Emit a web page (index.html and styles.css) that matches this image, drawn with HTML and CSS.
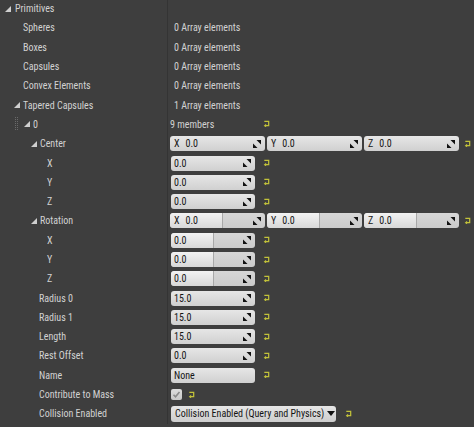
FILE: index.html
```html
<!DOCTYPE html>
<html>
<head>
<meta charset="utf-8">
<link rel="stylesheet" href="styles.css">
</head>
<body>
<div class="panel">
  <div class="row"><div class="name i6"><span class="tri"><svg viewBox="0 0 6 6"><polygon points="6,0 6,6 0,6"/></svg></span>Primitives</div><div class="val noline"></div></div>
  <div class="row"><div class="name i23">Spheres</div><div class="val"><span class="txt t4">0 Array elements</span></div></div>
  <div class="row"><div class="name i23">Boxes</div><div class="val"><span class="txt t4">0 Array elements</span></div></div>
  <div class="row"><div class="name i23">Capsules</div><div class="val"><span class="txt t4">0 Array elements</span></div></div>
  <div class="row"><div class="name i23">Convex Elements</div><div class="val"><span class="txt t4">0 Array elements</span></div></div>
  <div class="row"><div class="name i14"><span class="tri"><svg viewBox="0 0 6 6"><polygon points="6,0 6,6 0,6"/></svg></span>Tapered Capsules</div><div class="val"><span class="txt t4">1 Array elements</span></div></div>
  <div class="row"><div class="name i14"><span class="grip"><svg viewBox="0 0 4 14"><g fill="#6a6a6a"><rect x="0" y="0" width="1" height="1"/><rect x="2" y="0" width="1" height="1"/><rect x="0" y="2" width="1" height="1"/><rect x="2" y="2" width="1" height="1"/><rect x="0" y="4" width="1" height="1"/><rect x="2" y="4" width="1" height="1"/><rect x="0" y="6" width="1" height="1"/><rect x="2" y="6" width="1" height="1"/><rect x="0" y="8" width="1" height="1"/><rect x="2" y="8" width="1" height="1"/><rect x="0" y="10" width="1" height="1"/><rect x="2" y="10" width="1" height="1"/><rect x="0" y="12" width="1" height="1"/><rect x="2" y="12" width="1" height="1"/></g></svg></span><span class="tri"><svg viewBox="0 0 6 6"><polygon points="6,0 6,6 0,6"/></svg></span>0</div><div class="val"><span class="txt members">9 members</span><span class="reset"><svg viewBox="0 0 8 8"><path d="M1.5 1.5H6.5V6.5H3.2" fill="none" stroke="#c2c23a" stroke-width="1.4"/><polygon points="0.8,6.5 3.6,4.4 3.6,8.6" fill="#c2c23a"/></svg></span></div></div>

  <div class="row"><div class="name i30"><span class="tri"><svg viewBox="0 0 6 6"><polygon points="6,0 6,6 0,6"/></svg></span>Center</div>
    <div class="val vec">
      <div class="field wide"><span class="ax">X</span><span class="num">0.0</span><span class="spin"><svg viewBox="0 0 8 8"><polygon points="3.5,0 8,0 8,4.5"/><polygon points="0,3.5 0,8 4.5,8"/></svg></span></div>
      <div class="field wide"><span class="ax">Y</span><span class="num">0.0</span><span class="spin"><svg viewBox="0 0 8 8"><polygon points="3.5,0 8,0 8,4.5"/><polygon points="0,3.5 0,8 4.5,8"/></svg></span></div>
      <div class="field wide"><span class="ax">Z</span><span class="num">0.0</span><span class="spin"><svg viewBox="0 0 8 8"><polygon points="3.5,0 8,0 8,4.5"/><polygon points="0,3.5 0,8 4.5,8"/></svg></span></div>
      <span class="reset rv"><svg viewBox="0 0 8 8"><path d="M1.5 1.5H6.5V6.5H3.2" fill="none" stroke="#c2c23a" stroke-width="1.4"/><polygon points="0.8,6.5 3.6,4.4 3.6,8.6" fill="#c2c23a"/></svg></span>
    </div></div>
  <div class="row"><div class="name i47">X</div><div class="val"><div class="field"><span class="num">0.0</span><span class="spin"><svg viewBox="0 0 8 8"><polygon points="3.5,0 8,0 8,4.5"/><polygon points="0,3.5 0,8 4.5,8"/></svg></span></div><span class="reset"><svg viewBox="0 0 8 8"><path d="M1.5 1.5H6.5V6.5H3.2" fill="none" stroke="#c2c23a" stroke-width="1.4"/><polygon points="0.8,6.5 3.6,4.4 3.6,8.6" fill="#c2c23a"/></svg></span></div></div>
  <div class="row"><div class="name i47">Y</div><div class="val"><div class="field"><span class="num">0.0</span><span class="spin"><svg viewBox="0 0 8 8"><polygon points="3.5,0 8,0 8,4.5"/><polygon points="0,3.5 0,8 4.5,8"/></svg></span></div><span class="reset"><svg viewBox="0 0 8 8"><path d="M1.5 1.5H6.5V6.5H3.2" fill="none" stroke="#c2c23a" stroke-width="1.4"/><polygon points="0.8,6.5 3.6,4.4 3.6,8.6" fill="#c2c23a"/></svg></span></div></div>
  <div class="row"><div class="name i47">Z</div><div class="val"><div class="field"><span class="num">0.0</span><span class="spin"><svg viewBox="0 0 8 8"><polygon points="3.5,0 8,0 8,4.5"/><polygon points="0,3.5 0,8 4.5,8"/></svg></span></div><span class="reset"><svg viewBox="0 0 8 8"><path d="M1.5 1.5H6.5V6.5H3.2" fill="none" stroke="#c2c23a" stroke-width="1.4"/><polygon points="0.8,6.5 3.6,4.4 3.6,8.6" fill="#c2c23a"/></svg></span></div></div>

  <div class="row"><div class="name i30"><span class="tri"><svg viewBox="0 0 6 6"><polygon points="6,0 6,6 0,6"/></svg></span>Rotation</div>
    <div class="val vec">
      <div class="field wide slider"><span class="fill"></span><span class="ax">X</span><span class="num">0.0</span><span class="spin"><svg viewBox="0 0 8 8"><polygon points="3.5,0 8,0 8,4.5"/><polygon points="0,3.5 0,8 4.5,8"/></svg></span></div>
      <div class="field wide slider"><span class="fill"></span><span class="ax">Y</span><span class="num">0.0</span><span class="spin"><svg viewBox="0 0 8 8"><polygon points="3.5,0 8,0 8,4.5"/><polygon points="0,3.5 0,8 4.5,8"/></svg></span></div>
      <div class="field wide slider"><span class="fill"></span><span class="ax">Z</span><span class="num">0.0</span><span class="spin"><svg viewBox="0 0 8 8"><polygon points="3.5,0 8,0 8,4.5"/><polygon points="0,3.5 0,8 4.5,8"/></svg></span></div>
      <span class="reset rv"><svg viewBox="0 0 8 8"><path d="M1.5 1.5H6.5V6.5H3.2" fill="none" stroke="#c2c23a" stroke-width="1.4"/><polygon points="0.8,6.5 3.6,4.4 3.6,8.6" fill="#c2c23a"/></svg></span>
    </div></div>
  <div class="row"><div class="name i47">X</div><div class="val"><div class="field slider"><span class="fill"></span><span class="num">0.0</span><span class="spin"><svg viewBox="0 0 8 8"><polygon points="3.5,0 8,0 8,4.5"/><polygon points="0,3.5 0,8 4.5,8"/></svg></span></div><span class="reset"><svg viewBox="0 0 8 8"><path d="M1.5 1.5H6.5V6.5H3.2" fill="none" stroke="#c2c23a" stroke-width="1.4"/><polygon points="0.8,6.5 3.6,4.4 3.6,8.6" fill="#c2c23a"/></svg></span></div></div>
  <div class="row"><div class="name i47">Y</div><div class="val"><div class="field slider"><span class="fill"></span><span class="num">0.0</span><span class="spin"><svg viewBox="0 0 8 8"><polygon points="3.5,0 8,0 8,4.5"/><polygon points="0,3.5 0,8 4.5,8"/></svg></span></div><span class="reset"><svg viewBox="0 0 8 8"><path d="M1.5 1.5H6.5V6.5H3.2" fill="none" stroke="#c2c23a" stroke-width="1.4"/><polygon points="0.8,6.5 3.6,4.4 3.6,8.6" fill="#c2c23a"/></svg></span></div></div>
  <div class="row"><div class="name i47">Z</div><div class="val"><div class="field slider"><span class="fill"></span><span class="num">0.0</span><span class="spin"><svg viewBox="0 0 8 8"><polygon points="3.5,0 8,0 8,4.5"/><polygon points="0,3.5 0,8 4.5,8"/></svg></span></div><span class="reset"><svg viewBox="0 0 8 8"><path d="M1.5 1.5H6.5V6.5H3.2" fill="none" stroke="#c2c23a" stroke-width="1.4"/><polygon points="0.8,6.5 3.6,4.4 3.6,8.6" fill="#c2c23a"/></svg></span></div></div>

  <div class="row"><div class="name i39">Radius 0</div><div class="val"><div class="field"><span class="num">15.0</span><span class="spin"><svg viewBox="0 0 8 8"><polygon points="3.5,0 8,0 8,4.5"/><polygon points="0,3.5 0,8 4.5,8"/></svg></span></div><span class="reset"><svg viewBox="0 0 8 8"><path d="M1.5 1.5H6.5V6.5H3.2" fill="none" stroke="#c2c23a" stroke-width="1.4"/><polygon points="0.8,6.5 3.6,4.4 3.6,8.6" fill="#c2c23a"/></svg></span></div></div>
  <div class="row"><div class="name i39">Radius 1</div><div class="val"><div class="field"><span class="num">15.0</span><span class="spin"><svg viewBox="0 0 8 8"><polygon points="3.5,0 8,0 8,4.5"/><polygon points="0,3.5 0,8 4.5,8"/></svg></span></div><span class="reset"><svg viewBox="0 0 8 8"><path d="M1.5 1.5H6.5V6.5H3.2" fill="none" stroke="#c2c23a" stroke-width="1.4"/><polygon points="0.8,6.5 3.6,4.4 3.6,8.6" fill="#c2c23a"/></svg></span></div></div>
  <div class="row"><div class="name i39">Length</div><div class="val"><div class="field"><span class="num">15.0</span><span class="spin"><svg viewBox="0 0 8 8"><polygon points="3.5,0 8,0 8,4.5"/><polygon points="0,3.5 0,8 4.5,8"/></svg></span></div><span class="reset"><svg viewBox="0 0 8 8"><path d="M1.5 1.5H6.5V6.5H3.2" fill="none" stroke="#c2c23a" stroke-width="1.4"/><polygon points="0.8,6.5 3.6,4.4 3.6,8.6" fill="#c2c23a"/></svg></span></div></div>
  <div class="row"><div class="name i39">Rest Offset</div><div class="val"><div class="field"><span class="num">0.0</span><span class="spin"><svg viewBox="0 0 8 8"><polygon points="3.5,0 8,0 8,4.5"/><polygon points="0,3.5 0,8 4.5,8"/></svg></span></div><span class="reset"><svg viewBox="0 0 8 8"><path d="M1.5 1.5H6.5V6.5H3.2" fill="none" stroke="#c2c23a" stroke-width="1.4"/><polygon points="0.8,6.5 3.6,4.4 3.6,8.6" fill="#c2c23a"/></svg></span></div></div>
  <div class="row"><div class="name i39">Name</div><div class="val"><div class="field"><span class="num">None</span></div><span class="reset"><svg viewBox="0 0 8 8"><path d="M1.5 1.5H6.5V6.5H3.2" fill="none" stroke="#c2c23a" stroke-width="1.4"/><polygon points="0.8,6.5 3.6,4.4 3.6,8.6" fill="#c2c23a"/></svg></span></div></div>
  <div class="row"><div class="name i39">Contribute to Mass</div><div class="val"><span class="check"><svg viewBox="0 0 11 11"><path d="M2.5 5.8L4.5 7.8L8.5 3" fill="none" stroke="#8a8a8a" stroke-width="1.6"/></svg></span><span class="reset rc"><svg viewBox="0 0 8 8"><path d="M1.5 1.5H6.5V6.5H3.2" fill="none" stroke="#c2c23a" stroke-width="1.4"/><polygon points="0.8,6.5 3.6,4.4 3.6,8.6" fill="#c2c23a"/></svg></span></div></div>
  <div class="row"><div class="name i39">Collision Enabled</div><div class="val"><div class="combo"><span class="ctext">Collision Enabled (Query and Physics)</span><span class="carrow"><svg viewBox="0 0 8 5"><polygon points="0,0 8,0 4,5"/></svg></span></div><span class="reset rd"><svg viewBox="0 0 8 8"><path d="M1.5 1.5H6.5V6.5H3.2" fill="none" stroke="#c2c23a" stroke-width="1.4"/><polygon points="0.8,6.5 3.6,4.4 3.6,8.6" fill="#c2c23a"/></svg></span></div></div>
</div>
</body>
</html>
```

FILE: styles.css
```css
html, body {
  margin: 0;
  padding: 0;
  background: #3e3e3e;
  width: 474px;
  height: 427px;
  overflow: hidden;
}
body {
  font-family: Roboto, "Liberation Sans", sans-serif;
  font-stretch: condensed;
  font-size: 10px;
  color: #d2d2d2;
}
.panel {
  margin-top: -1px;
  display: flex;
  flex-direction: column;
}
.row {
  display: grid;
  grid-template-columns: 167px 1fr;
  height: 19.3px;
}
.name {
  display: flex;
  align-items: center;
  white-space: nowrap;
}
.i6 { padding-left: 5px; }
.i14 { padding-left: 14px; }
.i23 { padding-left: 23px; }
.i30 { padding-left: 31px; }
.i39 { padding-left: 39px; }
.i47 { padding-left: 47px; }
.tri {
  width: 6px;
  height: 6px;
  margin-right: 3px;
  display: flex;
}
.i6 .tri { margin-right: 4px; }
.tri svg { width: 6px; height: 6px; fill: #cfcfcf; }
.grip {
  width: 4px;
  height: 14px;
  display: flex;
  margin-right: 5px;
  margin-left: 1px;
}
.grip svg { width: 4px; height: 14px; }
.val {
  border-left: 1px solid #343434;
  display: flex;
  align-items: center;
  padding-left: 3px;
  white-space: nowrap;
}
.txt { color: #d2d2d2; }
.t4 { padding-left: 3px; }
.members { width: 85px; padding-left: 0; margin-left: -1px; }
.reset {
  width: 8px;
  height: 8px;
  display: flex;
  margin-left: 8px;
}
.reset svg { width: 7px; height: 7px; }
.members + .reset { margin-left: 8px; }
.rv { margin-left: 3px; }
.rc { margin-left: 6px; }
.rd { margin-left: 9px; }
.vec { padding-left: 2px; gap: 2px; }
.field {
  position: relative;
  width: 84px;
  height: 15px;
  box-sizing: border-box;
  border-radius: 3px;
  background: linear-gradient(#e6e6e6, #d0d0d0);
  display: flex;
  align-items: center;
  color: #151515;
  padding-left: 3px;
  overflow: hidden;
}
.field.wide { width: 95px; }
.field.slider { background: linear-gradient(#d6d6d6, #cbcbcb); }
.fill {
  position: absolute;
  left: 0;
  top: 0;
  bottom: 0;
  width: 50%;
  background: linear-gradient(#f2f2f2, #d8d8d8);
  border-right: 1px solid #a8a8a8;
  border-radius: 3px 0 0 3px;
}
.wide .fill { width: 55%; }
.ax { position: relative; margin-left: 1px; margin-right: 6px; }
.num { position: relative; }
.spin {
  position: relative;
  margin-left: auto;
  margin-right: 4px;
  width: 8px;
  height: 8px;
  display: flex;
}
.spin svg { width: 8px; height: 8px; fill: #111; }
.check {
  width: 11px;
  height: 11px;
  margin-left: 0;
  border-radius: 2px;
  background: linear-gradient(#dcdcdc, #c8c8c8);
  display: flex;
}
.check svg { width: 11px; height: 11px; }
.combo {
  width: 165px;
  height: 16px;
  box-sizing: border-box;
  border-radius: 3px;
  background: linear-gradient(#e6e6e6, #cdcdcd);
  display: flex;
  align-items: center;
  padding-left: 4px;
  color: #151515;
}
.ctext { font-size: 10px; }
.carrow { margin-left: 3px; display: flex; width: 8px; height: 5px; }
.carrow svg { width: 8px; height: 5px; fill: #111; }
```
